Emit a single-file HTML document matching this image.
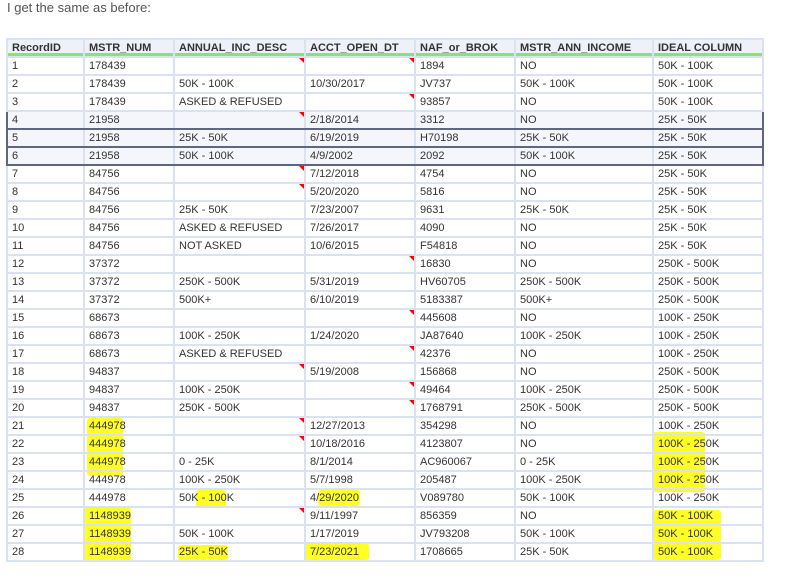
<!DOCTYPE html>
<html><head><meta charset="utf-8"><style>
body{margin:0;background:#fff;width:796px;height:586px;overflow:hidden;position:relative;font-family:"Liberation Sans",sans-serif;}
.t{position:absolute;left:7px;top:0px;font-size:13px;color:#555;}
table{position:absolute;left:6px;top:38px;border-collapse:collapse;table-layout:fixed;font-size:11px;color:#333;}
td,th{border:2px solid #dbe2ef;height:16px;padding:0 0 0 4px;text-align:left;white-space:nowrap;overflow:hidden;position:relative;line-height:16px;}
th{background:#eef1f7;font-weight:bold;color:#333;box-shadow:inset 0 -3px 0 #90e070;height:16px;}
tr.s td{border-top:2px solid #5f6780;border-bottom:2px solid #5f6780;background:#f4f6fb;}
tr.s td:first-child{border-left:2px solid #5f6780;}
tr.s td:last-child{border-right:2px solid #5f6780;}
.r::after{content:"";position:absolute;right:-1px;top:-1px;border-top:7px solid #f00;border-left:7px solid transparent;}
.y{position:absolute;background:#ffff00;opacity:.85;mix-blend-mode:multiply;border-radius:3px;}
</style></head><body>
<div class="t">I get the same as before:</div>
<div class="y" style="left:87px;top:418px;width:36px;height:58px"></div>
<div class="y" style="left:196px;top:490px;width:30px;height:18px"></div>
<div class="y" style="left:318px;top:490px;width:42px;height:16px"></div>
<div class="y" style="left:85px;top:507px;width:46px;height:55px"></div>
<div class="y" style="left:178px;top:545px;width:50px;height:16px"></div>
<div class="y" style="left:305px;top:543px;width:64px;height:17px"></div>
<div class="y" style="left:653px;top:432px;width:52px;height:60px"></div>
<div class="y" style="left:653px;top:510px;width:68px;height:50px"></div>
<table>
<colgroup><col style="width:77px"><col style="width:90px"><col style="width:131px"><col style="width:110px"><col style="width:100px"><col style="width:138px"><col style="width:110px"></colgroup>
<tr><th>RecordID</th><th>MSTR_NUM</th><th>ANNUAL_INC_DESC</th><th>ACCT_OPEN_DT</th><th>NAF_or_BROK</th><th>MSTR_ANN_INCOME</th><th>IDEAL COLUMN</th></tr>
<tr><td>1</td><td>178439</td><td class="r"></td><td class="r"></td><td>1894</td><td>NO</td><td>50K - 100K</td></tr>
<tr><td>2</td><td>178439</td><td>50K - 100K</td><td>10/30/2017</td><td>JV737</td><td>50K - 100K</td><td>50K - 100K</td></tr>
<tr><td>3</td><td>178439</td><td>ASKED &amp; REFUSED</td><td class="r"></td><td>93857</td><td>NO</td><td>50K - 100K</td></tr>
<tr class="s"><td>4</td><td>21958</td><td class="r"></td><td>2/18/2014</td><td>3312</td><td>NO</td><td>25K - 50K</td></tr>
<tr class="s"><td>5</td><td>21958</td><td>25K - 50K</td><td>6/19/2019</td><td>H70198</td><td>25K - 50K</td><td>25K - 50K</td></tr>
<tr class="s"><td>6</td><td>21958</td><td>50K - 100K</td><td>4/9/2002</td><td>2092</td><td>50K - 100K</td><td>25K - 50K</td></tr>
<tr><td>7</td><td>84756</td><td class="r"></td><td>7/12/2018</td><td>4754</td><td>NO</td><td>25K - 50K</td></tr>
<tr><td>8</td><td>84756</td><td class="r"></td><td>5/20/2020</td><td>5816</td><td>NO</td><td>25K - 50K</td></tr>
<tr><td>9</td><td>84756</td><td>25K - 50K</td><td>7/23/2007</td><td>9631</td><td>25K - 50K</td><td>25K - 50K</td></tr>
<tr><td>10</td><td>84756</td><td>ASKED &amp; REFUSED</td><td>7/26/2017</td><td>4090</td><td>NO</td><td>25K - 50K</td></tr>
<tr><td>11</td><td>84756</td><td>NOT ASKED</td><td>10/6/2015</td><td>F54818</td><td>NO</td><td>25K - 50K</td></tr>
<tr><td>12</td><td>37372</td><td></td><td class="r"></td><td>16830</td><td>NO</td><td>250K - 500K</td></tr>
<tr><td>13</td><td>37372</td><td>250K - 500K</td><td>5/31/2019</td><td>HV60705</td><td>250K - 500K</td><td>250K - 500K</td></tr>
<tr><td>14</td><td>37372</td><td>500K+</td><td>6/10/2019</td><td>5183387</td><td>500K+</td><td>250K - 500K</td></tr>
<tr><td>15</td><td>68673</td><td></td><td class="r"></td><td>445608</td><td>NO</td><td>100K - 250K</td></tr>
<tr><td>16</td><td>68673</td><td>100K - 250K</td><td>1/24/2020</td><td>JA87640</td><td>100K - 250K</td><td>100K - 250K</td></tr>
<tr><td>17</td><td>68673</td><td>ASKED &amp; REFUSED</td><td class="r"></td><td>42376</td><td>NO</td><td>100K - 250K</td></tr>
<tr><td>18</td><td>94837</td><td class="r"></td><td>5/19/2008</td><td>156868</td><td>NO</td><td>250K - 500K</td></tr>
<tr><td>19</td><td>94837</td><td>100K - 250K</td><td class="r"></td><td>49464</td><td>100K - 250K</td><td>250K - 500K</td></tr>
<tr><td>20</td><td>94837</td><td>250K - 500K</td><td class="r"></td><td>1768791</td><td>250K - 500K</td><td>250K - 500K</td></tr>
<tr><td>21</td><td>444978</td><td class="r"></td><td>12/27/2013</td><td>354298</td><td>NO</td><td>100K - 250K</td></tr>
<tr><td>22</td><td>444978</td><td class="r"></td><td>10/18/2016</td><td>4123807</td><td>NO</td><td>100K - 250K</td></tr>
<tr><td>23</td><td>444978</td><td>0 - 25K</td><td>8/1/2014</td><td>AC960067</td><td>0 - 25K</td><td>100K - 250K</td></tr>
<tr><td>24</td><td>444978</td><td>100K - 250K</td><td>5/7/1998</td><td>205487</td><td>100K - 250K</td><td>100K - 250K</td></tr>
<tr><td>25</td><td>444978</td><td>50K - 100K</td><td>4/29/2020</td><td>V089780</td><td>50K - 100K</td><td>100K - 250K</td></tr>
<tr><td>26</td><td>1148939</td><td class="r"></td><td>9/11/1997</td><td>856359</td><td>NO</td><td>50K - 100K</td></tr>
<tr><td>27</td><td>1148939</td><td>50K - 100K</td><td>1/17/2019</td><td>JV793208</td><td>50K - 100K</td><td>50K - 100K</td></tr>
<tr><td>28</td><td>1148939</td><td>25K - 50K</td><td>7/23/2021</td><td>1708665</td><td>25K - 50K</td><td>50K - 100K</td></tr>
</table>
</body></html>
